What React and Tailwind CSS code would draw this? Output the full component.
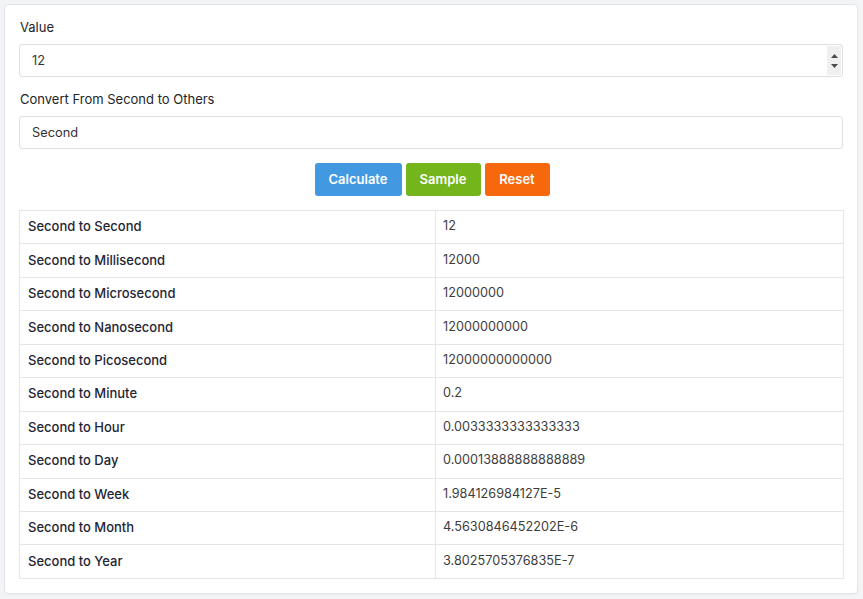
import React from "react";

const rows = [
  ["Second to Second", "12"],
  ["Second to Millisecond", "12000"],
  ["Second to Microsecond", "12000000"],
  ["Second to Nanosecond", "12000000000"],
  ["Second to Picosecond", "12000000000000"],
  ["Second to Minute", "0.2"],
  ["Second to Hour", "0.0033333333333333"],
  ["Second to Day", "0.00013888888888889"],
  ["Second to Week", "1.984126984127E-5"],
  ["Second to Month", "4.5630846452202E-6"],
  ["Second to Year", "3.8025705376835E-7"],
];

export default function App() {
  return (
    <div className="w-[863px] h-[599px] bg-[#f3f4f6] pt-[4px] pl-[4px] font-['Inter',sans-serif] text-[13px] text-[#212529]">
      <div className="w-[854px] h-[590px] bg-white border border-[#e3e6ea] rounded-[4px] px-[14px] pt-[14px] shadow-[0_1px_2px_rgba(0,0,0,0.04)]">
        <div className="h-[16px] leading-[16px] mb-[9px] pl-[1px]">Value</div>
        <div className="relative h-[33px] border border-[#dcdfe4] rounded-[3px] flex items-center pl-[12px] text-[#333] text-[12.8px]">
          <span>12</span>
          <div className="absolute right-[1px] top-[1px] bottom-[1px] w-[14px] bg-[#efefef] flex flex-col items-center justify-center gap-[6px]">
            <svg width="7" height="4" viewBox="0 0 7 4"><path d="M0 4 L3.5 0 L7 4 Z" fill="#4a4a4a" /></svg>
            <svg width="7" height="4" viewBox="0 0 7 4"><path d="M0 0 L3.5 4 L7 0 Z" fill="#4a4a4a" /></svg>
          </div>
        </div>
        <div className="h-[16px] leading-[16px] mt-[14px] mb-[9px] pl-[1px]">Convert From Second to Others</div>
        <div className="h-[33px] border border-[#dcdfe4] rounded-[3px] flex items-center pl-[12px] text-[#333] text-[12.8px]">Second</div>
        <div className="flex justify-center gap-[4px] mt-[14px] pl-[2px]">
          <button className="w-[87px] h-[33px] rounded-[3px] bg-[#4299e1] text-white font-semibold text-[13px]">Calculate</button>
          <button className="w-[75px] h-[33px] rounded-[3px] bg-[#73b51a] text-white font-semibold text-[13px]">Sample</button>
          <button className="w-[65px] h-[33px] rounded-[3px] bg-[#f7670b] text-white font-semibold text-[13px]">Reset</button>
        </div>
        <table className="mt-[14px] w-[825px] border-collapse table-fixed">
          <colgroup>
            <col className="w-[416px]" />
            <col />
          </colgroup>
          <tbody>
            {rows.map(([a, b]) => (
              <tr key={a} className="h-[33.45px]">
                <td className="border border-[#e3e6ea] px-[8px] pb-[2px] font-medium text-[#1f2533] leading-[16px] text-[13px]">{a}</td>
                <td className="border border-[#e3e6ea] px-[7px] pb-[2px] text-[#3d3d3d] leading-[16px] text-[12.7px]">{b}</td>
              </tr>
            ))}
          </tbody>
        </table>
      </div>
    </div>
  );
}
